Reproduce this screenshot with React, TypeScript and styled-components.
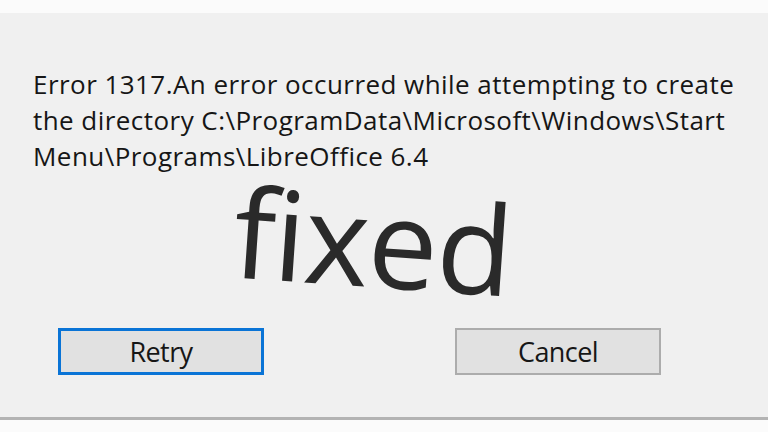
import React from "react";
import styled, { createGlobalStyle } from "styled-components";

const GlobalStyle = createGlobalStyle`
  html, body { margin: 0; padding: 0; background: #fbfbfb; }
  body { width: 768px; height: 432px; overflow: hidden; }
`;

const Screen = styled.div`
  width: 768px;
  height: 432px;
  display: flex;
  flex-direction: column;
  background: #fbfbfb;
`;

const TopStrip = styled.div`
  height: 13px;
  background: #fbfbfb;
`;

const Dialog = styled.div`
  height: 407px;
  box-sizing: border-box;
  background: #f0f0f0;
  border-bottom: 3px solid #b3b3b3;
  display: flex;
  flex-direction: column;
`;

const Message = styled.div`
  padding: 53px 0 0 33px;
  font-family: "Open Sans", "Noto Sans", sans-serif;
  font-size: 26px;
  font-weight: 500;
  line-height: 36px;
  color: #161616;
  letter-spacing: 0.45px;
  white-space: nowrap;
`;

const Line = styled.div``;

const Stamp = styled.div`
  height: 150px;
  display: flex;
  justify-content: center;
  padding-right: 24px;
`;

const StampWord = styled.span`
  font-family: "Open Sans", "Noto Sans", sans-serif;
  font-size: 124px;
  font-weight: 500;
  line-height: 118px;
  color: #2a2a2a;
  transform: rotate(4deg);
  transform-origin: center;
  margin-top: 6px;
  letter-spacing: -1px;
`;

const ButtonRow = styled.div`
  display: flex;
  padding: 4px 0 0 58px;
  gap: 191px;
`;

const Button = styled.button<{ $primary?: boolean }>`
  width: 206px;
  height: 47px;
  box-sizing: border-box;
  background: #e1e1e1;
  border: ${(p) => (p.$primary ? "3px solid #0a74d6" : "2px solid #acacac")};
  font-family: "Open Sans", "Noto Sans", sans-serif;
  font-size: 27px;
  font-weight: 500;
  color: #161616;
  padding: 0;
  display: flex;
  align-items: center;
  justify-content: center;
  letter-spacing: -0.6px;
`;

export default function App() {
  return (
    <>
      <GlobalStyle />
      <Screen>
        <TopStrip />
        <Dialog>
          <Message>
            <Line>Error 1317.An error occurred while attempting to create</Line>
            <Line>the directory C:\ProgramData\Microsoft\Windows\Start</Line>
            <Line>Menu\Programs\LibreOffice 6.4</Line>
          </Message>
          <Stamp>
            <StampWord>fixed</StampWord>
          </Stamp>
          <ButtonRow>
            <Button $primary>Retry</Button>
            <Button>Cancel</Button>
          </ButtonRow>
        </Dialog>
      </Screen>
    </>
  );
}
